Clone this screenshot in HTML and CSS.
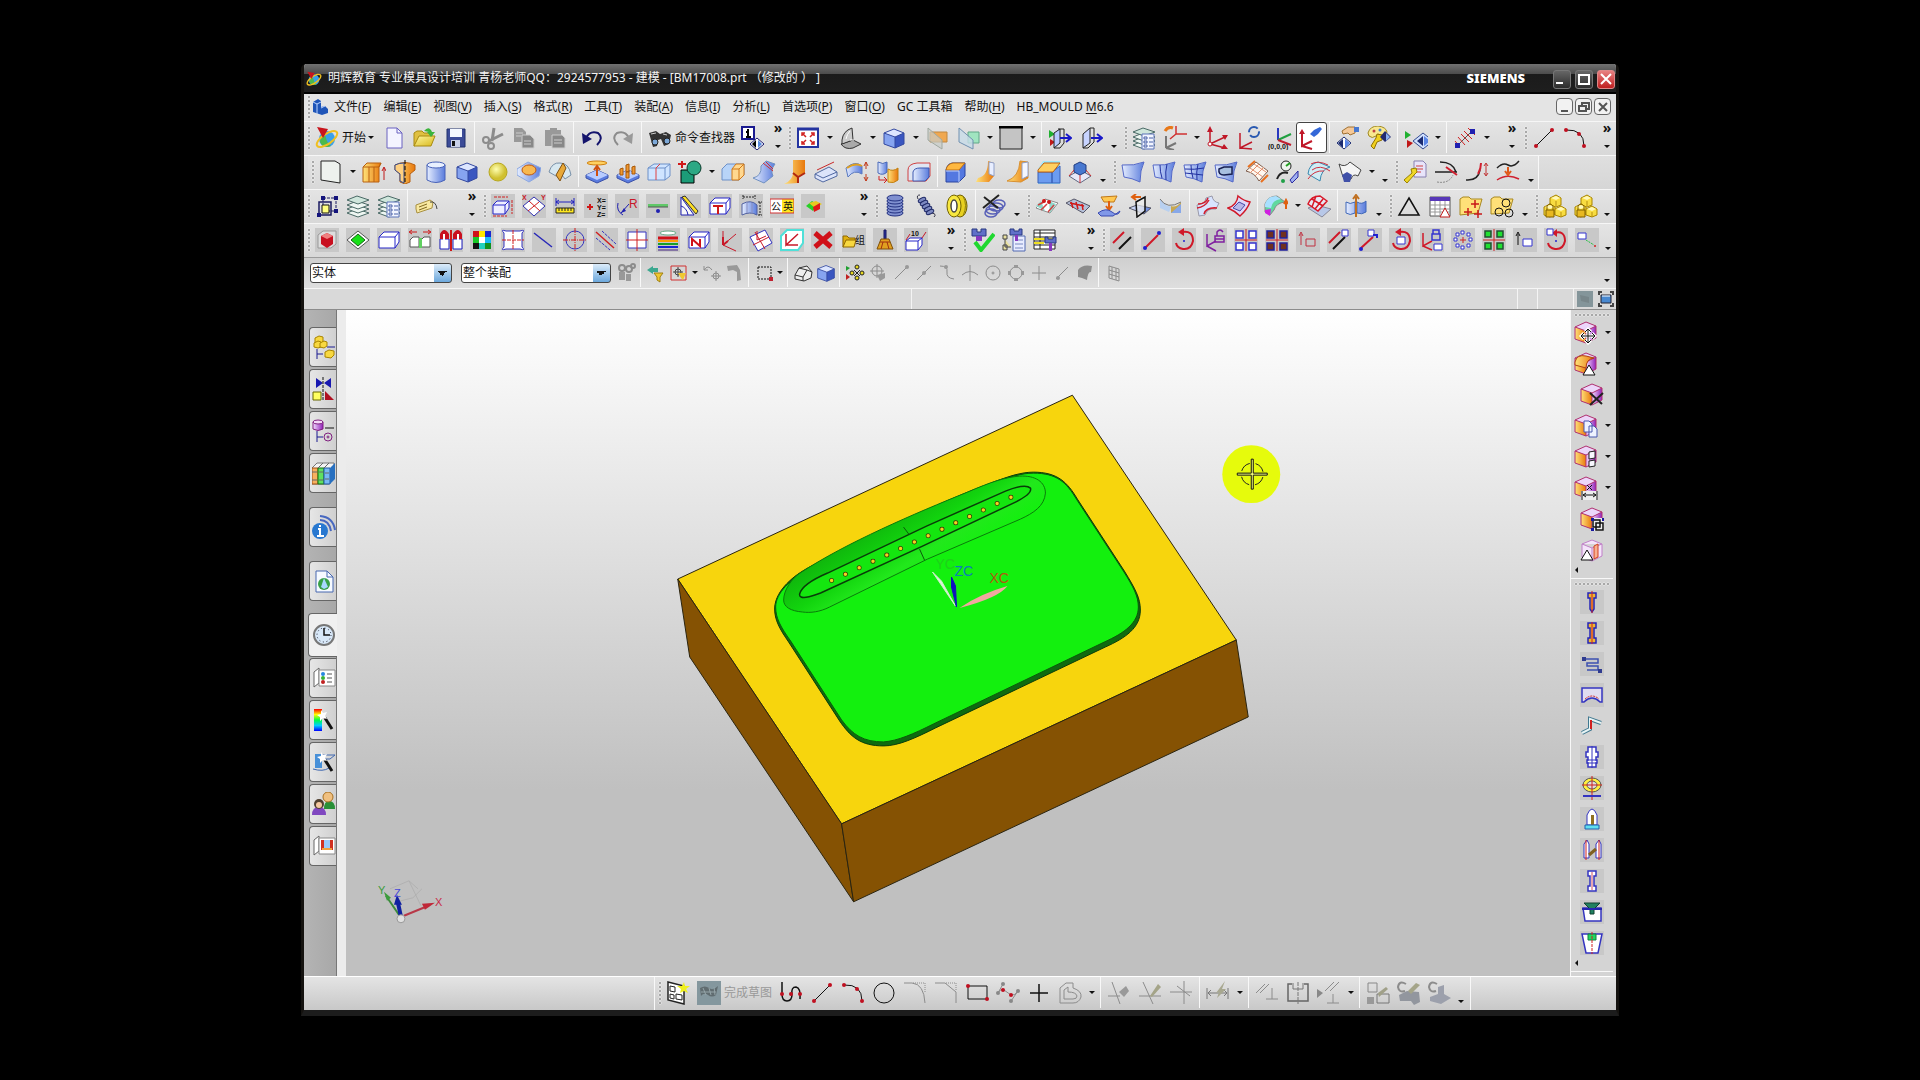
FILE: index.html
```html
<!DOCTYPE html>
<html lang="zh-CN">
<head>
<meta charset="utf-8">
<title>NX 建模 - BM17008.prt</title>
<link rel="stylesheet" href="styles.css">
</head>
<body>
<svg class="defs" aria-hidden="true">
<defs>
<linearGradient id="B"><stop offset="0" stop-color="#e6eeff"/><stop offset="1" stop-color="#5a7cdc"/></linearGradient>
<linearGradient id="O"><stop offset="0" stop-color="#ffe27a"/><stop offset="1" stop-color="#e8780c"/></linearGradient>
<linearGradient id="Y" y2="1"><stop offset="0" stop-color="#fff7a0"/><stop offset="1" stop-color="#d8b81c"/></linearGradient>
<linearGradient id="P"><stop offset="0" stop-color="#f3dcff"/><stop offset="1" stop-color="#9020b8"/></linearGradient>
<linearGradient id="R" x2="0" y2="1"><stop offset="0" stop-color="#f00"/><stop offset=".25" stop-color="#ff0"/><stop offset=".5" stop-color="#0f4"/><stop offset=".75" stop-color="#0cf"/><stop offset="1" stop-color="#00f"/></linearGradient>
<linearGradient id="G" gradientUnits="userSpaceOnUse" x1="545" y1="195" x2="590" y2="265"><stop offset="0" stop-color="#0fae0c"/><stop offset=".45" stop-color="#12d40e"/><stop offset=".7" stop-color="#22e81c"/><stop offset="1" stop-color="#13f00e"/></linearGradient>
<radialGradient id="S" cx=".4" cy=".35"><stop offset="0" stop-color="#ffffb0"/><stop offset="1" stop-color="#d0c030"/></radialGradient>
</defs>
<symbol id="logo" viewBox="0 0 24 24"><circle cx="12" cy="13" r="8" fill="#3aa0e8"/><path d="M6 9q4-2 5 3t5 8q-8 3-11-4z" fill="#4cba4c"/><ellipse cx="12" cy="13" rx="12" ry="5" transform="rotate(-35 12 13)" fill="none" stroke="#f0c020" stroke-width="2"/><path d="M2 1l11 2-5 9z" fill="#c8141c"/></symbol>
<symbol id="cube" viewBox="0 0 24 24"><path d="M2 7l10-4 10 4-9 4z" fill="#dde6ff"/><path d="M2 7l11 4v11L2 18z" fill="#86a4f0"/><path d="M13 11l9-4v11l-9 4z" fill="#3a56c0"/><path d="M2 7l10-4 10 4v11l-9 4-11-4zM2 7l11 4 9-4M13 11v11" fill="none" stroke="#3348a0"/></symbol>
<symbol id="layers" viewBox="0 0 24 24"><g stroke="#4a6a66" fill="#eef6f2"><path d="M1 19l10-4 12 4-11 4z"/><path d="M1 15l10-4 12 4-11 4z"/><path d="M1 11l10-4 12 4-11 4z"/><path d="M1 6l10-4 12 4-11 4z" fill="#cfe6dc"/></g></symbol>
<symbol id="sheet" viewBox="0 0 24 24"><use href="#layers"/><path d="M10 8h12v15H10z" fill="#f2f5ff" stroke="#5a72b8"/><path d="M12 11h3v2h-3zM12 15h3v2h-3zM12 19h3v2h-3zM17 12h4M17 16h4M17 20h4" fill="none" stroke="#4860a8"/></symbol>
<symbol id="csys" viewBox="0 0 24 24"><path d="M4 2v16l15-7M4 18l15 4" fill="none" stroke="#c01828" stroke-width="1.500"/><path d="M4 0l-3 6h6zM22 9l-6 0 3 5zM22 23l-4-5-3 5z" fill="#c01828"/></symbol>
<symbol id="face" viewBox="0 0 24 24"><path d="M1 6l11-5 10 4-10 5z" fill="#ecd6fa"/><path d="M1 6l11 4v12L1 18z" fill="url(#O)"/><path d="M12 10l10-5v12l-10 5z" fill="url(#P)"/><path d="M1 6l11-5 10 4v12l-10 5-11-4zM1 6l11 4 10-5M12 10v12" fill="none" stroke="#b03070"/></symbol>
<symbol id="gold" viewBox="0 0 24 24"><g stroke="#a88400" fill="#f8dc40"><path d="M7 4l6-3 5 3v7l-5 2-6-2z"/><path d="M1 13l6-3 5 3v7l-5 3-6-2z"/><path d="M12 15l6-3 5 3v6l-5 2-6-2z"/></g><g fill="#fff8b8"><path d="M8 4l5-2 4 2-4 2zM2 13l5-2 4 2-4 2zM13 15l5-2 4 2-4 2z"/></g><path d="M13 7v5M7 16v6M18 18v5" stroke="#b89010" fill="none"/></symbol>
<symbol id="lock" viewBox="0 0 24 24"><path d="M3 16h8v7H3z" fill="#e8b820" stroke="#806000"/><path d="M4 16v-4q3-4 6 0v4" fill="none" stroke="#806000"/></symbol>
<symbol id="diamond" viewBox="0 0 24 24"><path d="M12 4l10 8-10 8-10-8z" fill="#cfe0ff" stroke="#334a90"/><path d="M12 7v10l-6-5z" fill="#1a2a70"/><path d="M13 7v10l6-5z" fill="#5a86e8"/></symbol>
<symbol id="cyl" viewBox="0 0 24 24"><path d="M3 5v15q9 5 18 0V5z" fill="url(#B)" stroke="#4862b8"/><ellipse cx="12" cy="5" rx="9" ry="3" fill="#e8f0ff" stroke="#4862b8"/></symbol>
<symbol id="slab" viewBox="0 0 24 24"><path d="M1 15l11-5 11 5v3l-11 5-11-5z" fill="#5a7ce0" stroke="#3a50a8"/><path d="M1 15l11-5 11 5-11 5z" fill="#b8ccff"/></symbol>
<symbol id="surf" viewBox="0 0 24 24"><path d="M1 5q12 1 22-3-4 8-4 20-8-4-16-5-1-6-2-12z" fill="url(#B)" stroke="#5468c8"/></symbol>
<symbol id="page" viewBox="0 0 24 24"><path d="M2 6l5-4v15l-5 4z" fill="#fff" stroke="#666"/><path d="M7 4h16v16H7z" fill="#fff" stroke="#888"/></symbol>
<symbol id="block" viewBox="0 0 24 24"><path d="M2 9l5-5h15v10l-4 6H2zM2 9h16v11M18 9l4-5" fill="#fff" stroke="#2626c8"/></symbol>
</svg>

<div class="window">
<header class="title">
<svg class="i16" viewBox="0 0 24 24"><use href="#logo"/></svg>
<h1>明辉教育 专业模具设计培训 青杨老师QQ：2924577953 - 建模 - [BM17008.prt （修改的 ） ]</h1>
<strong>SIEMENS</strong>
<div class="wbtns">
<button aria-label="最小化"><svg><path class="w2" d="M3 13h7"/></svg></button>
<button aria-label="最大化"><svg><path class="w2" d="M4 5h10v9H4z"/></svg></button>
<button class="close" aria-label="关闭"><svg><path class="w2" d="M4 4l10 10M14 4L4 14"/></svg></button>
</div>
</header>

<nav class="menu">
<i class="grip"></i>
<svg class="i16"><path d="M1 3l5-3 3 2v6l4-1 3 3v4l-6 2-9-3z" fill="#1f55b8"/><path d="M1 3l4 2v10M9 9l4-2M5 5l4-2" stroke="#bcd4ff"/></svg>
<button>文件(<u>F</u>)</button><button>编辑(<u>E</u>)</button><button>视图(<u>V</u>)</button><button>插入(<u>S</u>)</button><button>格式(<u>R</u>)</button><button>工具(<u>T</u>)</button><button>装配(<u>A</u>)</button><button>信息(<u>I</u>)</button><button>分析(<u>L</u>)</button><button>首选项(<u>P</u>)</button><button>窗口(<u>O</u>)</button><button>GC 工具箱</button><button>帮助(<u>H</u>)</button><button>HB_MOULD <u>M</u>6.6</button>
<div class="mdi">
<button aria-label="最小化文档"><svg><path d="M4 12h7" class="d2"/></svg></button>
<button aria-label="还原文档"><svg><path d="M6 6V4h7v6h-2M3 7h7v5H3z" class="d2"/></svg></button>
<button aria-label="关闭文档"><svg><path d="M4 4l8 8M12 4l-8 8" class="d2"/></svg></button>
</div>
</nav>

<div class="row">
<div class="bar"><i class="grip"></i>
<button class="lbl start"><svg><use href="#logo"/></svg>开始<i class="dn"></i></button>
<button class="b" aria-label="新建"><svg><path d="M5 2h10l5 5v15H5z" fill="#f4f4ff" stroke="#6a62c0"/><path d="M15 2v5h5" stroke="#6a62c0"/></svg></button>
<button class="b" aria-label="打开"><svg><path d="M1 20V7l3-2h5l2 2h8v4z" fill="#e0c040" stroke="#a88a10"/><path d="M1 20l5-10h16l-4 10z" fill="url(#Y)" stroke="#a88a10"/><path d="M11 5q5-6 8 1h3l-4 5-4-5h2" fill="#3cb43c"/></svg></button>
<button class="b" aria-label="保存"><svg><path d="M3 3h18v18H3z" fill="#3c4c98" stroke="#20306c"/><path d="M6 3h12v8H6z" fill="#f4f8ff"/><path d="M7 14h9v7H7z" fill="#c8d0e8"/><path d="M8 15h3v5H8z" fill="#111"/></svg></button>
<i class="sep"></i>
<button class="b" aria-label="剪切"><svg><path d="M13 2l-2 13M22 8L8 15" class="g" stroke-width="3"/><circle cx="5" cy="14" r="3" class="g2"/><circle cx="10" cy="20" r="3" class="g2"/></svg></button>
<button class="b" aria-label="复制"><svg><path d="M2 2h8l4 4v10H2z" fill="#999"/><path d="M10 9h8l4 4v9H10z" fill="#888" stroke="#ccc"/><path d="M4 7h7M4 10h5M12 15h7M12 18h7" stroke="#ccc"/></svg></button>
<button class="b" aria-label="粘贴"><svg><path d="M2 4h16v16H2zM7 2h7v4H7z" fill="#999"/><path d="M9 9h10l3 3v10H9z" fill="#888" stroke="#ccc"/><path d="M11 14h8M11 17h8" stroke="#ccc"/></svg></button>
<i class="sep"></i>
<button class="b" aria-label="撤消"><svg><path d="M6 12q4-8 12-5 6 5-1 12" stroke="#14146c" stroke-width="2"/><path d="M2 7l1 11 9-5z" fill="#14146c"/></svg></button>
<button class="b" aria-label="重做"><svg><path d="M18 12q-4-8-12-5-6 5 1 12" class="g" stroke-width="2"/><path d="M22 7l-1 11-9-5z" fill="#999"/></svg></button>
<i class="sep"></i>
<button class="lbl find"><svg><path d="M1 7l7-2 4 3 6-2 5 3-2 9-5 2-3-7-3 1-1 6-4 1z" fill="#333"/><circle cx="7" cy="16" r="3" fill="#7ca8d8" stroke="#222"/><circle cx="19" cy="15" r="3" fill="#7ca8d8" stroke="#222"/><path d="M3 8l5-1M15 8l4 1" stroke="#ccc"/></svg>命令查找器</button>
<button class="b" aria-label="信息"><svg><path d="M1 1h12v12H1z" fill="#fff" stroke="#1a1a90" stroke-width="2"/><path d="M7 3v2M5 6h2v5M5 11h5" stroke="#000" stroke-width="2"/><path d="M16 12l7 6-7 6-7-6z" fill="#fff" stroke="#1a1a70"/><path d="M15 14v8l-4-4z" fill="#000"/><path d="M17 14v8l4-4z" fill="#58d"/></svg></button>
<div class="more m16"><span>»</span><i class="dn"></i></div></div>

<div class="bar"><i class="grip"></i>
<button class="b" aria-label="适合窗口"><svg><path d="M2 3h20v18H2z" fill="#fff" stroke="#2434a0" stroke-width="2"/><path d="M1 3h22" stroke="#2434a0" stroke-width="3"/><path d="M6 10V7h3M15 7h3v3M18 15v3h-3M9 18H6v-3M7 8l3 3M17 8l-3 3M17 17l-3-3M7 17l3-3" stroke="#d02020" stroke-width="1.500"/></svg></button><i class="dn"></i>
<button class="b" aria-label="视图方位"><svg><path d="M2 18l12-4 8 4-8 4q-8 2-12-4z" fill="#aaa" stroke="#333"/><path d="M3 14Q4 5 13 2l1 12-11 4z" fill="#ccc" stroke="#333"/><path d="M7 13q1-5 4-8M11 14h4" stroke="#fff"/></svg></button><i class="dn"></i>
<button class="b" aria-label="着色"><svg><use href="#cube"/></svg></button><i class="dn"></i>
<button class="b" aria-label="剪切截面"><svg><path d="M5 6h17v10H5z" fill="#f0a850" stroke="#c08840"/><path d="M3 2l14 12v9L3 14z" fill="#c8ccc8" fill-opacity=".7" stroke="#a0a8a0"/></svg></button>
<button class="b" aria-label="编辑截面"><svg><path d="M12 6h11v11H12z" fill="#a0e4c0" stroke="#60a888"/><path d="M3 2l14 12v9L3 16z" fill="#c8dce8" fill-opacity=".8" stroke="#7090b0"/></svg></button><i class="dn"></i>
<button class="b" aria-label="背景"><svg><path d="M1 1h22v22H1z" fill="#c4c4c4" stroke="#222"/><path d="M0 1h24" stroke="#000" stroke-width="3"/></svg></button><i class="dn"></i><i class="sep"></i>
<button class="b" aria-label="显示部件"><svg><path d="M1 4l6 4-6 4z" fill="#20b030"/><path d="M2 13l5 3-5 4z" fill="#c01818"/><path d="M6 7l6-4v14l-6 5z" fill="#b8c8ff" stroke="#222"/><path d="M10 3h6v14l-4 5H6" stroke="#222"/><path d="M12 12h10M18 8l5 4-5 4" stroke="#1818c8" stroke-width="2"/></svg></button>
<button class="b" aria-label="隐藏部件"><svg><path d="M4 8l7-6v15l-7 5z" fill="#c8d4ff" stroke="#222"/><path d="M11 2h4v14l-6 6H4" stroke="#222"/><path d="M12 12h10M18 8l5 4-5 4" stroke="#1818c8" stroke-width="2"/></svg></button>
<div class="more"><i class="dn"></i></div></div>

<div class="bar"><i class="grip"></i>
<button class="b" aria-label="图层设置"><svg><use href="#sheet"/></svg></button>
<button class="b" aria-label="动态WCS"><svg><path d="M3 22V10M3 22l10-5M3 22l8 2" stroke="#777" stroke-width="2"/><path d="M13 8V0M13 8l-6 5M13 8h11" stroke="#d03030" stroke-width="1.500"/><path d="M2 5q3-5 8-3" stroke="#e87818" stroke-width="3"/></svg></button><i class="dn"></i>
<button class="b" aria-label="WCS原点"><svg><use href="#csys"/><circle cx="4" cy="18" r="2" fill="#fff" stroke="#c01828"/></svg></button>
<button class="b" aria-label="旋转WCS"><svg><path d="M3 7v15l12-6M3 22l12 1" stroke="#c01828" stroke-width="1.500"/><circle cx="17" cy="6" r="5" stroke="#2858b0" stroke-width="2" stroke-dasharray="12 3"/></svg></button>
<button class="b" aria-label="WCS至绝对"><svg><path d="M10 14V2" stroke="#2838c0" stroke-width="2"/><path d="M10 14l13-6" stroke="#20a040" stroke-width="2"/><path d="M10 14l13 5" stroke="#c02030" stroke-width="2"/><text x="0" y="23" class="tiny">(0,0,0)</text></svg></button>
<button class="b on" aria-label="显示WCS"><svg><path d="M3 5v15l10-5M3 20l10 3" stroke="#c01828" stroke-width="2"/><path d="M3 3l-3 5h6z" fill="#c01828"/><path d="M11 8l4-4 6-3 2 2-4 5-4 3z" fill="#3468d8"/></svg></button>
<i class="sep"></i>
<button class="b" aria-label="编辑对象显示"><svg><path d="M8 11l7 6-7 6-7-6z" fill="#fff" stroke="#1a2a70"/><path d="M7 13v9l-5-5z" fill="#1a2a70"/><path d="M9 13v9l5-5z" fill="#5a86e8"/><path d="M6 5l6-4h7v6l-5 2-2-2-5 1z" fill="#f4c898" stroke="#a07030"/><path d="M18 1h5v5h-5z" fill="#4878d0"/></svg></button>
<button class="b" aria-label="编辑"><svg><path d="M1 7q2-7 10-7 8 1 9 6-1 4-6 3-3-2-5 1-4 3-7 0z" fill="#f8e890" stroke="#a08820"/><circle cx="7" cy="5" r="1.500" fill="#c04040"/><circle cx="13" cy="4" r="1.500" fill="#4080d0"/><path d="M4 20l5-8 1-4 5 1 0 5-5 2-3 7z" fill="#f0d020" stroke="#907000"/><path d="M18 5l6 6-6 5-5-5z" fill="#222a70"/><path d="M19 7v8l4-4z" fill="#8ab0f0"/></svg></button>
<i class="sep"></i>
<button class="b" aria-label="显示和隐藏"><svg><path d="M1 5l6 4-6 4z" fill="#20b030"/><path d="M3 14l6 3-6 5z" fill="#c01818"/><svg x="7" y="3" width="17" height="17" viewBox="0 0 24 24"><use href="#diamond"/></svg></svg></button><i class="dn"></i><i class="sep"></i>
<button class="b" aria-label="测量距离"><svg><path d="M5 19L19 5" stroke="#555"/><path d="M5 11l7 8M8 8l8 8M11 5l8 8M2 15l5 6M15 2l7 7" stroke="#d02020"/><path d="M2 17h5v5H2zM17 3h5v5h-5z" fill="#2020b0"/></svg></button><i class="dn"></i>
<div class="more m28"><span>»</span><i class="dn"></i></div></div>

<div class="bar last"><i class="grip"></i>
<button class="b" aria-label="直线"><svg><path d="M4 20L20 4" stroke="#111"/><circle cx="4" cy="20" r="2" fill="#c01020"/><circle cx="20" cy="4" r="2" fill="#c01020"/></svg></button>
<button class="b" aria-label="圆弧"><svg><path d="M3 4q18-1 18 16" stroke="#111"/><circle cx="3" cy="4" r="2" fill="#c01020"/><circle cx="16" cy="8" r="2" fill="#c01020"/><circle cx="21" cy="20" r="2" fill="#c01020"/></svg></button>
<div class="more m14"><span>»</span><i class="dn"></i></div></div>
</div>

<div class="row in">
<div class="bar"><i class="grip"></i>
<button class="b" aria-label="草图"><svg><path d="M2 1h14l5 3v19L2 20z" fill="#eef2ee" stroke="#222"/></svg></button><i class="dn"></i>
<button class="b" aria-label="拉伸"><svg><path d="M1 7l4-4h14l-2 4v15H1z" fill="url(#O)" stroke="#b86010"/><path d="M1 7h16l2-4M7 7v15M12 7v15" stroke="#b86010"/><path d="M22 20V8M20 11l2-4 2 4" stroke="#c01818"/></svg></button>
<button class="b" aria-label="回转"><svg><path d="M2 5q10-5 20 0v5l-5 4v8l-5 2-5-2v-8l-5-4z" fill="url(#O)" stroke="#b86010"/><path d="M2 5q4-2 9-2v20l-4-2v-7l-5-4z" fill="#ffd080" stroke="#334a90"/><path d="M12 0v24" stroke="#000" stroke-dasharray="4 2"/></svg></button>
<button class="b" aria-label="圆柱"><svg><use href="#cyl"/></svg></button>
<button class="b" aria-label="长方体"><svg><use href="#cube"/></svg></button>
<button class="b" aria-label="球"><svg><circle cx="12" cy="12" r="9" fill="url(#S)" stroke="#b8a820"/></svg></button>
<button class="b" aria-label="孔"><svg><path d="M0 9l11-7 13 6-2 8-10 6-12-7z" fill="url(#B)" stroke="#8ca8e0"/><ellipse cx="12" cy="10" rx="7" ry="5" fill="#f8b850" stroke="#c05810"/></svg></button>
<button class="b" aria-label="螺纹"><svg><path d="M1 12Q4 2 12 3q9 0 11 12l-6 4q-3-6-9-3z" fill="#d8e8f0" stroke="#7890a8"/><path d="M15 3l-7 12 4 6 6-13z" fill="#e8a838" stroke="#805010"/></svg></button>
<i class="sep"></i>
<button class="b" aria-label="凸起"><svg><use href="#slab"/><ellipse cx="12" cy="3" rx="10" ry="2" fill="#ffd060" stroke="#d08010"/><path d="M12 16V7M9 10l3-4 3 4" stroke="#d05010" stroke-width="2"/></svg></button>
<button class="b" aria-label="阵列特征"><svg><use href="#slab"/><path d="M4 15V9l3-1v7zM10 12V5l3-1v8zM16 14V7l3-1v8zM10 18v-6l3-1v7z" fill="#f09830" stroke="#a85808"/></svg></button>
<button class="b" aria-label="拆分体"><svg><path d="M1 8l6-4h16v12l-5 4H1z" fill="#cfe4ff" stroke="#6c90c8"/><path d="M1 8h17v12M18 8l5-4" stroke="#6c90c8"/><path d="M13 4l-4 4v12" stroke="#e04040"/></svg></button>
<button class="b" aria-label="求和"><svg><path d="M3 10h13v13H3z" fill="#1c9c78" stroke="#000"/><circle cx="16" cy="8" r="7" fill="#2ca884" stroke="#083828"/><path d="M4 1v7M0 4h8" stroke="#d01818" stroke-width="2"/></svg></button><i class="dn"></i>
<button class="b" aria-label="修剪体"><svg><path d="M1 9l5-5h17v11l-5 5H1z" fill="#b8d4f8" stroke="#6c90c8"/><path d="M11 9l4-5h8v11l-5 5h-7z" fill="#ffd890" stroke="#d07818"/><path d="M11 9h7l5-5M18 9v11" stroke="#d07818"/></svg></button>
<button class="b" aria-label="缝合"><svg><path d="M1 18q9-2 8-12l5-5 9 3q-5 6-2 12l-9 7z" fill="url(#B)" stroke="#7090c0"/><path d="M11 3l10 8M14 2l7 7" stroke="#d03030"/></svg></button>
<button class="b" aria-label="加厚"><svg><path d="M10 0h12v13l-7 3-5-3zM10 13l5 3v7l-14 1q9-4 9-11z" fill="url(#O)"/><path d="M10 13l5 4 7-4M15 17v6" stroke="#b02810" stroke-width="2"/></svg></button>
<button class="b" aria-label="缩放"><svg><path d="M1 14l14-7 8 5v4L9 22l-8-4z" fill="#dce4fa" stroke="#5068a0"/><path d="M1 14l8 4 14-6" stroke="#5068a0"/><path d="M3 10l17-8" stroke="#c82828"/></svg></button>
<button class="b" aria-label="偏置面"><svg><path d="M1 8q9-8 16-2v8q-8-5-14 3z" fill="url(#B)" stroke="#5878c0"/><path d="M2 8q8-6 15-2" stroke="#e0a020" stroke-width="2"/><path d="M21 2v7M21 14v7M19 6l2-4 2 4M19 17l2 4 2-4" stroke="#c03818"/></svg></button>
<button class="b" aria-label="替换面"><svg><path d="M2 2q5 3 9 0v10q-4 4-9 1z" fill="url(#B)" stroke="#4868b8"/><path d="M12 9q5 3 10-1v12q-4 4-10 2z" fill="url(#O)" stroke="#c08010"/><path d="M3 16v4h7M8 17l3 3-3 3" stroke="#d02020"/></svg></button>
<button class="b" aria-label="包裹"><svg><path d="M1 10q0-6 9-7h13v13l-4 5H1z" fill="#dfe9ff" fill-opacity=".6" stroke="#d04040"/><path d="M6 12q1-4 7-4h9v9l-4 4H6z" fill="url(#B)" stroke="#3c58b0"/></svg></button>
<i class="sep"></i>
<button class="b" aria-label="边倒圆"><svg><path d="M2 10q1-6 6-7h13v13l-6 6H2z" fill="#5478e0" stroke="#2a44a0"/><path d="M2 10q1-6 7-7h12l-6 7z" fill="#ffb840" stroke="#c07010"/><path d="M2 11h13v11" stroke="#bcd0ff"/></svg></button>
<button class="b" aria-label="倒斜角"><svg><path d="M13 1l6 2v13l-5 6H1l2-4q10-2 10-17z" fill="url(#O)"/><path d="M19 3v13l-5-2V2z" fill="#e8eeff" stroke="#90a0c8"/></svg></button>
<button class="b" aria-label="拔模"><svg><path d="M14 1l8 1v16l-7 4-14-1q12-4 13-20z" fill="url(#O)" stroke="#d89030"/><path d="M16 3l6-1v14l-6 3z" fill="#f4f6ff" stroke="#90a0c8"/></svg></button>
<button class="b" aria-label="抽壳"><svg><path d="M1 9l5-8h17v23H1z" fill="#a0e8f8"/><path d="M1 12h14v11H1zM15 12l8-6v17h-8z" fill="#6c9cf0" stroke="#3860b8"/><path d="M1 10l6-7h16l-7 9H1z" fill="#ffd060" stroke="#c06010"/></svg></button>
<button class="b" aria-label="拔模体"><svg><path d="M1 16l11-6 11 6-11 7z" fill="#e8e8f8" stroke="#606880"/><path d="M6 5l6-3 6 3v7l-6 3-6-3z" fill="#4878d0" stroke="#203c80"/><path d="M1 16l5-6M23 16l-5-6M12 23v-8" stroke="#d03030"/></svg></button>
<div class="more"><i class="dn"></i></div></div>

<div class="bar"><i class="grip"></i>
<button class="b" aria-label="直纹面"><svg><use href="#surf"/></svg></button>
<button class="b" aria-label="通过曲线组"><svg><use href="#surf"/><path d="M8 5q0 7 2 13M15 4q-2 8-1 16" stroke="#2030a0"/></svg></button>
<button class="b" aria-label="通过曲线网格"><svg><use href="#surf"/><path d="M8 5q0 7 2 13M15 4q-2 8-1 16M2 9q9 1 19-1M2 13q9 1 18 2" stroke="#2030a0"/></svg></button>
<button class="b" aria-label="N边曲面"><svg><use href="#surf"/><path d="M5 9l5-2 8 0v7l-8 1q-6 0-5-6z" fill="#a8c0e0" stroke="#182050" stroke-width="1.500"/></svg></button>
<button class="b" aria-label="扫掠"><svg><path d="M1 11l10-9 12 9-9 10q-4-8-13-10z" fill="#fff8f0" stroke="#806050"/><path d="M5 8l13 9M9 4l12 8M5 13l9-9M10 16l9-9" stroke="#e09070"/><path d="M3 7l7-6M16 22l7-7" stroke="#e87020" stroke-width="2"/></svg></button>
<button class="b" aria-label="样式扫掠"><svg><circle cx="10" cy="6" r="5" fill="#eef4ee" stroke="#222"/><path d="M10 6l4-3" stroke="#20a020" stroke-width="2"/><path d="M1 19q3-8 11-6" stroke="#222" stroke-width="2"/><circle cx="7" cy="21" r="2" fill="#20a048"/><path d="M14 20l8-9v6l-6 6z" fill="#a0b0f0" stroke="#2828a0"/></svg></button>
<button class="b" aria-label="变化扫掠"><svg><path d="M1 14q1-10 10-12l12 5q-9 2-10 14z" fill="#d0ecf4" stroke="#3888b0"/><path d="M5 10q8-6 18 1M1 19q6-9 16-8M4 4q7-4 17 1" stroke="#d03040"/></svg></button>
<button class="b" aria-label="片体"><svg><path d="M1 4q6 4 11-2l11 8-3 6q-5-3-7 3-4 3-8-2z" fill="#f4f4f4" stroke="#444"/><path d="M4 15l5-3 5 3-2 7-6 0z" fill="#4050a8"/></svg></button><i class="dn"></i>
<div class="more"><i class="dn"></i></div></div>

<div class="bar"><i class="grip"></i>
<button class="b" aria-label="用户默认"><svg><path d="M11 1h9l3 3v13H11z" fill="#e8e4fa" stroke="#8880b0"/><path d="M13 6h7M13 9h7M13 12h5" stroke="#d04040"/><path d="M1 20l8-7-1-4 5-1 1 4-3 3-7 8z" fill="#f0d828" stroke="#988000"/></svg></button>
<button class="b" aria-label="修剪曲线"><svg><path d="M6 2q13 0 16 10M1 12h22" stroke="#222" stroke-width="1.500"/><path d="M3 22q12 2 16-7" stroke="#888" stroke-dasharray="2 1"/><path d="M12 7l11 8" stroke="#d02030" stroke-width="2"/></svg></button>
<button class="b" aria-label="曲线长度"><svg><path d="M1 20q12 1 14-10" stroke="#222" stroke-width="1.500"/><path d="M16 3q0 6-3 11" stroke="#d02030" stroke-width="2"/><path d="M21 4v11M19 6l2-3 2 3M19 13l2 3 2-3" stroke="#c03030"/></svg></button>
<button class="b" aria-label="偏置曲线"><svg><path d="M1 8q6-6 11-3t11-4" stroke="#222" stroke-width="1.500"/><path d="M1 20q10-7 22-1" stroke="#d02030" stroke-width="1.500"/><path d="M12 7v6M9 11l3 4 3-4" stroke="#e05818" stroke-width="2"/></svg></button>
<div class="more"><i class="dn"></i></div></div>
</div>

<div class="row">
<div class="bar"><i class="grip"></i>
<button class="b" aria-label="复合"><svg><path d="M8 4h13v13H8z" stroke="#1a1a60" stroke-dasharray="3 1"/><path d="M4 8h12v13H4z" stroke="#1a1a60" stroke-width="1.500"/><path d="M7 11h7v8H7z" fill="#ffff80" stroke="#111"/><path d="M6 2h4v4H6zM19 2h4v4h-4zM19 15h4v4h-4zM2 19h4v4H2z" fill="#14147c"/></svg></button>
<button class="b" aria-label="图层"><svg><use href="#layers"/></svg></button>
<button class="b" aria-label="图层类别"><svg><use href="#sheet"/></svg></button>
<i class="sep"></i>
<button class="b" aria-label="属性"><svg><path d="M2 11l14-5 3 2-1 6-15 5-1-4z" fill="#f8e8a0" stroke="#a89040"/><path d="M5 13l8-3M5 16l8-3" stroke="#806820"/><path d="M16 8q6-1 7 7" stroke="#444"/></svg></button>
<div class="more m38"><span>»</span><i class="dn"></i></div></div>

<div class="bar"><i class="grip"></i>
<button class="b t" aria-label="包容块"><svg><path d="M2 11l4-4h12v7l-4 6H2zM2 11h12v9M14 11l4-4" fill="#eef" stroke="#2626c8"/><path d="M3 3h14M21 6v14M2 22h14" stroke="#d02020" stroke-dasharray="3 1"/></svg></button>
<button class="b t" aria-label="分型网格"><svg><path d="M12 3l11 9-11 10L1 12z" fill="#fff" stroke="#3434b0"/><path d="M7 7l11 10M17 8L6 17" stroke="#d02020"/><text x="0" y="6" class="tiny red">X</text><text x="19" y="6" class="tiny red">Y</text></svg></button>
<button class="b t" aria-label="测量"><svg><path d="M3 4v8M21 4v8M3 8h18M6 6L3 8l3 2M18 6l3 2-3 2" stroke="#2020c0"/><path d="M3 14h18v5H3z" fill="#ffe820" stroke="#222"/><path d="M6 14v3M9 14v3M12 14v3M15 14v3M18 14v3" stroke="#222"/></svg></button>
<button class="b t" aria-label="坐标"><svg><path d="M6 10v6M3 13h6" stroke="#d01818" stroke-width="2"/><text x="13" y="9" class="tiny">X=</text><text x="13" y="16" class="tiny">Y=</text><text x="13" y="23" class="tiny">Z=</text></svg></button>
<button class="b t" aria-label="半径"><svg><path d="M3 9q-2 8 5 12M6 19l8-9" stroke="#2020b0"/><path d="M6 19l3-5 2 3z" fill="#2020b0"/><text x="14" y="14" class="small red">R</text></svg></button>
<button class="b t" aria-label="水平"><svg><path d="M2 10h20v3H2z" fill="#60c868"/><path d="M2 13h20" stroke="#555"/><circle cx="12" cy="17" r="2" fill="#2020b0"/></svg></button>
<button class="b t" aria-label="角度"><svg><path d="M4 3v18h13z" fill="#f8f8f8" stroke="#2020b0"/><path d="M5 3l3-1 13 15-2 3z" fill="#ffe020" stroke="#333"/><path d="M4 12q6 2 7 9" stroke="#2020b0"/></svg></button>
<button class="b t" aria-label="文字块"><svg><use href="#block"/><path d="M5 12h10M10 12v8" stroke="#d01818" stroke-width="2"/></svg></button>
<button class="b t" aria-label="模仁"><svg><path d="M3 10q9-5 15 1v10q-7-4-15 0z" fill="url(#B)" stroke="#5060a0"/><path d="M8 9v10M13 9v11" stroke="#8890c0"/><path d="M4 3h12M4 1v4M16 1v4M21 8v13M19 8h4M19 21h4" stroke="#222" stroke-dasharray="2 1"/></svg></button>
<button class="b t" aria-label="公英制"><svg><path d="M0 5h12v14H0z" fill="#fff"/><path d="M12 5h12v14H12z" fill="#ffe820"/><path d="M0 5h24v14H0z" stroke="#d03030"/><text x="1" y="16" class="cn">公</text><text x="13" y="16" class="cn">英</text></svg></button>
<button class="b t" aria-label="着色块"><svg><path d="M5 12l6-5 6 4-5 6z" fill="#28d028"/><path d="M8 9l7-2 6 3-7 4z" fill="#e8c820"/><path d="M12 13l7-4v6l-6 3z" fill="#e01818"/></svg></button>
<div class="more m43"><span>»</span><i class="dn"></i></div></div>

<div class="bar"><i class="grip"></i>
<button class="b" aria-label="圆柱弹簧"><svg><g fill="#8090d0" stroke="#223080"><ellipse cx="12" cy="19" rx="8" ry="3"/><ellipse cx="12" cy="16" rx="8" ry="3"/><ellipse cx="12" cy="13" rx="8" ry="3"/><ellipse cx="12" cy="10" rx="8" ry="3"/><ellipse cx="12" cy="7" rx="8" ry="3"/><ellipse cx="12" cy="4" rx="8" ry="3"/></g></svg></button>
<button class="b" aria-label="拉伸弹簧"><svg><path d="M4 5q-2-4 2-4M18 19q5 1 2 4" stroke="#334"/><g stroke="#202a68" fill="#7c88c0"><ellipse cx="8" cy="6" rx="4" ry="2" transform="rotate(-25 8 6)"/><ellipse cx="10" cy="9" rx="4" ry="2" transform="rotate(-25 10 9)"/><ellipse cx="12" cy="12" rx="4" ry="2" transform="rotate(-25 12 12)"/><ellipse cx="14" cy="15" rx="4" ry="2" transform="rotate(-25 14 15)"/><ellipse cx="16" cy="18" rx="4" ry="2" transform="rotate(-25 16 18)"/></g></svg></button>
<button class="b" aria-label="碟簧"><svg><ellipse cx="15" cy="12" rx="7" ry="11" fill="#e8d020" stroke="#706000"/><ellipse cx="9" cy="12" rx="7" ry="11" fill="#f8e840" stroke="#706000"/><path d="M18 2q5 9 0 20" stroke="#908010"/><ellipse cx="9" cy="12" rx="3" ry="6" fill="#fff" stroke="#444" stroke-width="1.500"/></svg></button>
<i class="sep"></i>
<button class="b" aria-label="删除弹簧"><svg><g stroke="#5860b8" stroke-width="1.500"><ellipse cx="9" cy="19" rx="6" ry="4"/><ellipse cx="11" cy="16" rx="7" ry="4"/><ellipse cx="14" cy="13" rx="7" ry="4"/><ellipse cx="17" cy="10" rx="6" ry="4"/></g><path d="M2 3l14 11M17 1L1 14" stroke="#222" stroke-width="2"/></svg></button>
<div class="more"><i class="dn"></i></div></div>

<div class="bar"><i class="grip"></i>
<button class="b" aria-label="曲面点"><svg><path d="M1 14L10 5l13 4-8 10z" fill="#fff" stroke="#888"/><path d="M1 12l5-5 4 10M14 7l7 3-6 9z" fill="#90d8cc"/><path d="M3 11l6-3M6 16l6-6M13 18l6-7" stroke="#d04040" stroke-width="1.500"/><circle cx="9" cy="7" r="2" fill="#d01818"/><circle cx="14" cy="8" r="2" fill="#d01818"/></svg></button>
<button class="b" aria-label="缝合面"><svg><path d="M0 9l8-4 16 7-7 7z" fill="#b4c0d8" stroke="#556"/><path d="M5 8l2 6M10 8l2 7M16 10l1 6M4 9l14 3" stroke="#d01818" stroke-width="1.500"/></svg></button>
<button class="b" aria-label="扩大"><svg><path d="M4 3l16-1-3 6H7z" fill="#ffc850" stroke="#c07818"/><path d="M12 15V7M9 12l3 4 3-4" stroke="#e06010" stroke-width="2"/><path d="M1 19q8-6 14-1t8-1l-7 5H4z" fill="#8098e8" stroke="#3848b0"/></svg></button>
<button class="b" aria-label="剪断"><svg><path d="M1 14l8-3 14 3-7 6z" fill="url(#B)" stroke="#556"/><path d="M8 8l9-5v14l-8 6z" fill="#eee" fill-opacity=".7" stroke="#111" stroke-width="1.500"/><path d="M5 3h8M8 0L4 3l4 3" stroke="#e06010" stroke-width="2"/></svg></button>
<button class="b" aria-label="X成形"><svg><path d="M1 5q7 9 12 7l-3 6-9-4z" fill="#b8d0f0"/><path d="M12 12q5 2 10-4v11H12z" fill="#c8a850"/><path d="M12 19l10-9v9z" fill="#88a8e8"/><path d="M1 5q7 11 21 3" stroke="#777"/></svg></button>
<i class="sep"></i>
<button class="b" aria-label="桥接"><svg><path d="M1 11q8-1 9-7l6-2q1 6 7 7l-3 6q-9-1-11 6l-6 1z" fill="#d8e4ff" stroke="#99a"/><path d="M2 10q8 0 10-6M8 20q2-7 13-6M1 14q8-1 12-8" stroke="#d02030" stroke-width="1.500"/></svg></button>
<button class="b" aria-label="偏置曲面"><svg><path d="M1 14q9-3 10-12 6 5 12 6-3 8-10 14-5-5-12-8z" fill="#e0d8f8" stroke="#d01828" stroke-width="1.500"/><path d="M6 14l6-6 6 3-5 6z" fill="#b8b8e8" stroke="#4848a8"/></svg></button>
<i class="sep"></i>
<button class="b" aria-label="面分析"><svg><path d="M1 10Q4 2 13 2l8 6q-9 1-11 8l-4 5-5-3z" fill="#60d8a0" stroke="#888"/><path d="M1 10q3-8 11-8l5 3Q8 6 7 14l-6-1z" fill="#a8e0ff"/><path d="M1 16l6-1-1 7-5-3z" fill="#d020e0"/><path d="M22 15V8M20 10l2-4 2 4" stroke="#e06010" stroke-width="2"/></svg></button><i class="dn"></i>
<button class="b" aria-label="网格曲面"><svg><path d="M1 14l8-3 15 4-9 8z" fill="#b8c8e8" stroke="#889"/><path d="M1 10q3-8 12-8l7 5-9 10z" fill="#e8e8f4"/><path d="M1 10q3-8 12-8l7 5-9 10zM5 5l11 7M9 2l-4 11M16 5L8 15" stroke="#d81828" stroke-width="1.500"/></svg></button>
<i class="sep"></i>
<button class="b" aria-label="对称"><svg><path d="M2 8q4 3 9 0v11q-5 3-9 0zM13 8q5 3 9-1v11q-4 3-9 1z" fill="url(#B)" stroke="#4068b8"/><path d="M12 3v20M9 5l3-4 3 4" stroke="#c07020" stroke-width="2"/></svg></button>
<div class="more"><i class="dn"></i></div></div>

<div class="bar"><i class="grip"></i>
<button class="b" aria-label="三角"><svg><path d="M12 4l10 17H2z" stroke="#111" stroke-width="1.500"/></svg></button>
<button class="b" aria-label="表格"><svg><path d="M2 3h20v19H2z" fill="#fff" stroke="#555"/><path d="M2 3h20v4H2z" fill="#5838b8"/><path d="M2 11h20M2 15h20M2 18h20M7 7v15M12 7v15M17 7v15" stroke="#999"/><path d="M17 14l5 9h-10z" fill="#fff" stroke="#c01818"/></svg></button>
<button class="b" aria-label="点组"><svg><path d="M1 21V5l3-2h6l2 2h11l-4 14z" fill="#ffe078" stroke="#a88820"/><path d="M16 6v8M12 10h8M9 14v8M5 18h8M19 16v8M15 20h8" stroke="#c81818" stroke-width="1.500"/></svg></button>
<button class="b" aria-label="圆组"><svg><path d="M1 20V5l3-2h6l2 2h11l-4 14z" fill="#ffe078" stroke="#a88820"/><circle cx="16" cy="9" r="4" stroke="#111"/><circle cx="9" cy="18" r="4" stroke="#111"/><circle cx="19" cy="19" r="4" stroke="#111"/></svg></button>
<div class="more"><i class="dn"></i></div></div>

<div class="bar last"><i class="grip"></i>
<button class="b" aria-label="锁定部件"><svg><use href="#gold"/><use href="#lock"/></svg></button>
<button class="b" aria-label="解锁部件"><svg><use href="#gold"/><use href="#lock"/></svg></button>
<div class="more m14"><i class="dn"></i></div></div>
</div>

<div class="row">
<div class="bar"><i class="grip"></i>
<button class="b t" aria-label="红块"><svg><path d="M3 7l5-4h13v13l-5 4H3z" fill="#ddd" stroke="#999"/><path d="M6 8l6-3 6 3v8l-6 4-6-4z" fill="#c81020"/><path d="M6 8l6 3 6-3-6-3z" fill="#f08080"/></svg></button>
<button class="b t" aria-label="绿面"><svg><path d="M12 3l11 9-11 9L1 12z" fill="#fff" stroke="#555"/><path d="M12 6l7 6-7 6-7-6z" fill="#18e018" stroke="#186018"/></svg></button>
<button class="b t" aria-label="块"><svg><use href="#block"/></svg></button>
<button class="b t" aria-label="移动块"><svg><path d="M2 12l3-3h6v10H2zM13 12l3-3h6v10h-9z" fill="#fff" stroke="#555"/><path d="M11 10h3v10h-3z" fill="#60d060"/><path d="M2 4h7M4 2L1 4l3 2M15 4h7M20 2l3 2-3 2" stroke="#d01818"/></svg></button>
<button class="b t" aria-label="对合"><svg><path d="M1 21V11h9v10zM14 21V11h9v10z" fill="#fff" stroke="#2020c0"/><path d="M1 11V6q4-8 9 0v5zM14 11V6q5-8 9 0v5z" fill="#c81020"/><path d="M12 2v21" stroke="#d01818" stroke-width="2"/><path d="M5 6v6M19 6v6" stroke="#fff" stroke-width="2"/></svg></button>
<button class="b t" aria-label="颜色"><svg><path d="M3 3h6v6H3z" fill="#d01018"/><path d="M9 3h6v6H9z" fill="#ffe800"/><path d="M15 3h6v6h-6z" fill="#1828d0"/><path d="M3 9h6v6H3z" fill="#18c828"/><path d="M9 9h6v6H9z" fill="#fff"/><path d="M15 9h6v6h-6z" fill="#18b8f8"/><path d="M3 15h6v6H3z" fill="#111"/><path d="M9 15h6v6H9z" fill="#20d0c0"/><path d="M15 15h6v6h-6z" fill="#109020"/></svg></button>
<button class="b t" aria-label="模架"><svg><path d="M3 5q-4-4 2-2h14q6-2 2 2v14q4 4-2 2H5q-6 2-2-2z" fill="#fff" stroke="#3434c0"/><path d="M12 2v20M1 12h22" stroke="#d02020" stroke-dasharray="4 1"/></svg></button>
<button class="b t" aria-label="蓝线"><svg><path d="M2 5l18 14" stroke="#2828b8" stroke-width="1.500"/></svg></button>
<button class="b t" aria-label="圆心线"><svg><circle cx="12" cy="12" r="9" stroke="#3434c0"/><path d="M12 0v24M0 12h24" stroke="#d02020" stroke-dasharray="5 1 1 1"/></svg></button>
<button class="b t" aria-label="平行线"><svg><path d="M2 4l18 16" stroke="#d02020" stroke-width="1.500"/><path d="M8 3l14 13M2 10l14 12" stroke="#3434c0" stroke-dasharray="3 1"/></svg></button>
<button class="b t" aria-label="十字板"><svg><path d="M3 4h18v16H3z" fill="#fff" stroke="#3434c0"/><path d="M12 1v22M1 12h22" stroke="#d02020"/></svg></button>
<button class="b t" aria-label="彩层"><svg><ellipse cx="12" cy="5" rx="8" ry="2" fill="#fff" stroke="#6a8"/><path d="M2 10h20" stroke="#d01018" stroke-width="3"/><path d="M2 13h20" stroke="#ffa000" stroke-width="2"/><path d="M2 16h20" stroke="#18a028" stroke-width="2"/><path d="M2 19h20" stroke="#1828d0" stroke-width="2"/><path d="M2 22h20" stroke="#402080"/></svg></button>
<button class="b t" aria-label="N块"><svg><use href="#block"/><path d="M5 18v-7l8 7v-7" stroke="#d01018" stroke-width="2"/></svg></button>
<button class="b t" aria-label="坐标系"><svg><path d="M5 3v14l13-11M5 17l13 6" stroke="#c81828"/><path d="M5 17l5-4M5 17V9" stroke="#c81828" stroke-width="2"/></svg></button>
<button class="b t" aria-label="基准"><svg><path d="M1 9l15-7 7 13-14 8z" fill="#fff" stroke="#3434c0"/><path d="M6 4l10 17M4 17l16-8M8 3v9l9-4" stroke="#c81828"/></svg></button>
<button class="b t" aria-label="基准块"><svg><path d="M1 8l6-6h16v13l-5 7H1z" fill="#fff" stroke="#50e0d8" stroke-width="2"/><path d="M6 6v11l12-11M6 17h12" stroke="#c81828" stroke-width="1.500"/></svg></button>
<button class="b t" aria-label="删除"><svg><path d="M4 5l16 14M20 5L4 19" stroke="#d01018" stroke-width="5"/></svg></button>
<button class="b t" aria-label="组"><svg><path d="M1 19V8h4l2 2h6v3z" fill="#e0b010" stroke="#906800"/><path d="M1 19l3-7h10l-2 7z" fill="#f8d840" stroke="#906800"/><text x="13" y="16" class="cn">组</text></svg></button>
<button class="b t" aria-label="清理"><svg><path d="M11 2h2v9h-2z" fill="#2830a0" stroke="#181860"/><path d="M8 11h8l4 10H4z" fill="#e0a020" stroke="#805008"/><path d="M10 14l-2 7M14 14l2 7M7 14h10" stroke="#a03010"/></svg></button>
<button class="b t" aria-label="偏置10"><svg><path d="M2 13l4-3h12v7l-4 5H2zM2 13h12v9M14 13l4-3" fill="#fff" stroke="#2626c8"/><text x="7" y="8" class="tiny">10</text><path d="M2 12l4-6M18 10l4-6" stroke="#c81828"/></svg></button>
<div class="more m28"><span>»</span><i class="dn"></i></div></div>

<div class="bar"><i class="grip"></i>
<button class="b" aria-label="检查"><svg><path d="M1 1h5v3h4V1h5v7H1z" fill="#6070c8" stroke="#283880"/><path d="M5 8h6v5H5z" fill="#8838c0"/><path d="M4 14l6 8L23 6" stroke="#20d830" stroke-width="4"/></svg></button>
<button class="b" aria-label="装配树"><svg><path d="M8 1h4v2h5V1h3v6H8z" fill="#6070c8" stroke="#283880"/><path d="M1 7h4v4H1zM1 17h4v5H1zM3 11v8h6" fill="#e8e0a0" stroke="#444"/><path d="M11 8h12v15H11z" fill="#e8ecff" stroke="#5068b0"/><path d="M13 12h8M13 16h8M13 20h8" stroke="#7888c0"/><path d="M13 7h3v6h-3z" fill="#8838c0"/></svg></button>
<button class="b" aria-label="清单"><svg><path d="M1 2h21v19H1z" fill="#fff" stroke="#222"/><path d="M1 5h21M1 9h21M1 13h21M1 17h21M7 2v19" stroke="#222"/><path d="M1 11h20M1 15h10" stroke="#f0e020" stroke-width="2"/><path d="M12 9h3v2h5V9h3v6H12z" fill="#6070c8" stroke="#283880"/><path d="M16 15h3v8h-3z" fill="#8838c0"/></svg></button>
<div class="more m38"><span>»</span><i class="dn"></i></div></div>

<div class="bar last"><i class="grip"></i>
<button class="b t" aria-label="平移线"><svg><path d="M3 15L14 4" stroke="#d01828" stroke-width="2"/><path d="M9 21L21 9" stroke="#111" stroke-width="2"/></svg></button>
<button class="b t" aria-label="两点线"><svg><path d="M4 20L17 7" stroke="#d01828" stroke-width="2"/><circle cx="4" cy="20" r="2" fill="#2020d0"/><circle cx="18" cy="5" r="2" fill="#2020d0"/></svg></button>
<button class="b t" aria-label="旋转"><svg><path d="M10 4q11-2 11 9-2 9-10 8-6-1-7-6" stroke="#d01828" stroke-width="2"/><path d="M12 0v8L6 4z" fill="#d01828"/><circle cx="12" cy="13" r="1" fill="#2020d0"/></svg></button>
<button class="b t" aria-label="坐标锁"><svg><path d="M4 6v12l9-5M4 18l9 5" stroke="#8020a0" stroke-width="1.500"/><path d="M12 8h9v6h-9zM14 8V4q3-4 6 0M12 11h9" stroke="#8020a0" stroke-width="1.500"/></svg></button>
<button class="b t" aria-label="四腔"><svg><path d="M2 3h7v7H2zM15 3h7v7h-7zM2 15h7v7H2zM15 15h7v7h-7z" fill="#fff" stroke="#3434d0" stroke-width="1.500"/><path d="M12 1v22M1 12h22" stroke="#d02020"/></svg></button>
<button class="b t" aria-label="实四腔"><svg><path d="M2 3h7v7H2zM15 3h7v7h-7zM2 15h7v7H2zM15 15h7v7h-7z" fill="#703020" stroke="#20209c" stroke-width="1.500"/><path d="M12 1v22M1 12h22" stroke="#d02020"/></svg></button>
<button class="b t" aria-label="矩形移动"><svg><path d="M10 11h9v7h-9z" stroke="#c03040"/><path d="M5 17V6M3 8l2-4 2 4" stroke="#c03040"/></svg></button>
<button class="b t" aria-label="平行复制"><svg><path d="M2 15L13 4" stroke="#d01828" stroke-width="2"/><path d="M6 21L18 9" stroke="#111" stroke-width="2"/><path d="M15 2h6v6h-6z" fill="#fff" stroke="#3434d0"/></svg></button>
<button class="b t" aria-label="点对点"><svg><path d="M3 20L15 9" stroke="#d01828" stroke-width="2"/><circle cx="3" cy="21" r="2" fill="#2020d0"/><path d="M10 2h6v6h-6z" fill="#fff" stroke="#3434d0"/><path d="M15 7h4v3" stroke="#2020d0" stroke-width="2"/></svg></button>
<button class="b t" aria-label="旋转复制"><svg><path d="M10 4q11-2 11 9-2 9-10 8-6-1-7-6" stroke="#d01828" stroke-width="2"/><path d="M12 0v8L6 4z" fill="#d01828"/><path d="M8 9h8v7H8z" fill="#fff" stroke="#3434d0"/></svg></button>
<button class="b t" aria-label="坐标复制"><svg><path d="M3 5v13l9-5M3 18l9 4" stroke="#d01828" stroke-width="1.500"/><path d="M12 6h8v6h-8zM13 6V2h6v4" stroke="#3434d0" stroke-width="1.500"/><path d="M14 16h8v6h-8z" fill="#fff" stroke="#3434d0"/></svg></button>
<button class="b t" aria-label="环形阵列"><svg><g fill="#fff" stroke="#3434d0"><path d="M10 3h3v3h-3zM10 18h3v3h-3zM3 10h3v3H3zM18 10h3v3h-3zM5 5h3v3H5zM16 5h3v3h-3zM5 16h3v3H5zM16 16h3v3h-3z"/></g><path d="M12 9v6M9 12h6" stroke="#d02020"/></svg></button>
<button class="b t" aria-label="绿四腔"><svg><path d="M3 3h6v6H3zM15 3h6v6h-6zM3 15h6v6H3zM15 15h6v6h-6z" fill="#20e030" stroke="#205030" stroke-width="1.500"/><path d="M12 1v22M1 12h22" stroke="#d02020"/></svg></button>
<button class="b t" aria-label="平移复制"><svg><path d="M10 11h9v7h-9z" fill="#fff" stroke="#3434d0"/><path d="M5 17V6M3 8l2-4 2 4" stroke="#111"/></svg></button>
<button class="b t" aria-label="绕点旋转"><svg><path d="M10 5q11-3 11 8-2 9-10 8-6-1-7-6" stroke="#d01828" stroke-width="2"/><path d="M13 1v8L8 5z" fill="#d01828"/><path d="M3 1h6v6H3z" fill="#fff" stroke="#3434d0"/><circle cx="12" cy="13" r="1" fill="#2020d0"/></svg></button>
<button class="b t" aria-label="缩放复制"><svg><path d="M3 5h8v6H3z" fill="#fff" stroke="#3434d0"/><path d="M11 12l8 5" stroke="#20c040" stroke-dasharray="2 1"/><circle cx="20" cy="18" r="1" fill="#d02020"/></svg></button>
<div class="more m14"><i class="dn"></i></div></div>
</div>

<div class="row filter">
<select class="s1" aria-label="类型过滤器"><option>实体</option></select>
<select class="s2" aria-label="选择范围"><option>整个装配</option></select>
<div class="fl">
<button class="c" aria-label="多选"><svg><path d="M2 9h6v8H2zM9 11h5v7H9z" fill="#999"/><circle cx="5" cy="5" r="3" class="g2"/><circle cx="12" cy="6" r="3" class="g2"/><circle cx="16" cy="3" r="2" class="g2"/></svg></button><i class="sep"></i>
<button class="c" aria-label="重置过滤器"><svg><path d="M1 7l6-4v2h5v4H7v2z" fill="#3ca890"/><path d="M8 10h9l-3 4v5l-3-2v-3z" fill="#f0c830" stroke="#a08010"/></svg></button>
<button class="c" aria-label="意图"><svg><path d="M2 3h15v14H2z" stroke="#d03030"/><path d="M9 4v10M4 9h10" stroke="#444"/><circle cx="9" cy="9" r="3" stroke="#444"/><path d="M9 10h8l-3 7-2-2z" fill="#f0c830"/></svg></button><i class="dn"></i>
<button class="c" aria-label="上一选择"><svg><path d="M2 7q4-6 8 0M2 3v4h4M14 8v10M9 13h10" class="g"/><circle cx="14" cy="13" r="3" class="g"/></svg></button>
<button class="c" aria-label="链"><svg><path d="M2 3l10-1 3 5 1 10-4 1V9L8 7 3 8z" fill="#999"/></svg></button><i class="sep"></i>
<button class="c" aria-label="矩形选择"><svg><path d="M4 4h13v12H4z" stroke="#111" stroke-dasharray="2 1"/><path d="M15 14h4v4h-4z" fill="#c02030"/></svg></button><i class="dn"></i><i class="sep"></i>
<button class="c" aria-label="线框"><svg><path d="M2 12l4-7 8-2 5 6-1 6-7 3-9-2z" fill="#eee" stroke="#333"/><path d="M2 12l8 2 4-7 5 2M10 14v4M6 5l8 2" stroke="#333"/></svg></button>
<button class="c" aria-label="体"><svg viewBox="0 0 24 24"><use href="#cube"/></svg></button><i class="sep"></i>
<button class="c" aria-label="启用捕捉"><svg><path d="M1 3l4 2-4 3z" fill="#20a030"/><path d="M1 11l4 3-4 3z" fill="#c02020"/><g fill="#e8d820" stroke="#222"><circle cx="12" cy="4" r="2"/><circle cx="12" cy="15" r="2"/><circle cx="7" cy="10" r="2"/><circle cx="17" cy="10" r="2"/></g><path d="M9 7l6 6M15 7l-6 6" stroke="#222"/></svg></button>
<button class="c" aria-label="清除捕捉"><svg><circle cx="9" cy="8" r="5" class="g"/><path d="M9 1v14M2 8h14" class="g"/><path d="M9 12l8-2v5l-5 3z" fill="#999"/></svg></button>
<button class="c" aria-label="端点"><svg><path d="M4 16L15 5" class="g"/><circle cx="16" cy="4" r="2" fill="#999"/></svg></button>
<button class="c" aria-label="中点"><svg><path d="M3 17L17 3" class="g"/><circle cx="10" cy="10" r="2" fill="#999"/></svg></button>
<button class="c" aria-label="控制点"><svg><path d="M3 3q8 0 7 6t7 7" class="g"/><circle cx="9" cy="4" r="2" fill="#999"/></svg></button>
<button class="c" aria-label="交点"><svg><path d="M10 2v16M2 12q8-7 16 0" class="g"/></svg></button>
<button class="c" aria-label="圆心"><svg><circle cx="10" cy="10" r="7" class="g"/><circle cx="10" cy="10" r="1" class="g"/></svg></button>
<button class="c" aria-label="象限点"><svg><circle cx="10" cy="10" r="6" class="g"/><path d="M8 2h4v3H8zM8 15h4v3H8zM2 8h3v4H2zM15 8h3v4h-3z" fill="#999"/></svg></button>
<button class="c" aria-label="现有点"><svg><path d="M10 3v14M3 10h14" class="g"/></svg></button>
<button class="c" aria-label="曲线上点"><svg><path d="M4 16L16 4" class="g"/><circle cx="6" cy="15" r="2" fill="#999"/></svg></button>
<button class="c" aria-label="面上点"><svg><path d="M3 7q4-6 14-4l-1 6q-3-1-4 8l-5-2-4-1z" fill="#8c8c8c"/></svg></button><i class="sep"></i>
<button class="c" aria-label="网格点"><svg><path d="M5 3l10 3v12L5 15zM8 4v12M12 5v12M5 7l10 3M5 11l10 3" class="g"/></svg></button>
</div>
<div class="more m14"><i class="dn"></i></div>
</div>

<div class="row status">
<span class="cue"></span><span class="stat"></span><span class="cell"></span><span class="cell wide"></span>
<button class="c" aria-label="草图状态"><svg class="i16"><path d="M0 0h16v16H0z" fill="#84959a"/><path d="M3 4l9 2v6l-8-2z" fill="#78868a"/></svg></button>
<button class="c" aria-label="全屏"><svg class="i16"><path d="M3 4h10v8H3z" fill="#4888d0" stroke="#223"/><path d="M4 5h8" stroke="#fff"/><path d="M1 4V1h3M12 1h3v3M15 12v3h-3M4 15H1v-3" stroke="#444" stroke-width="2"/></svg></button>
</div>

<main class="main">
<aside class="tabs">
<button aria-label="装配导航器"><svg><g fill="#f8d840" stroke="#a88400"><path d="M3 3l4-2 4 1v5l-3 2-5-1z"/><path d="M2 8l4-2 3 1v5l-3 1-4-1z"/><path d="M8 8l4-2 3 1v4l-3 2-4-1z"/><path d="M13 17l4-2 5 1v4l-3 3-6-1z"/></g><path d="M15 12h8M5 14v10M5 19h6" stroke="#1a1a90"/></svg></button>
<button aria-label="约束导航器"><svg><path d="M4 1l7 5-7 5zM19 1l-7 5 7 5z" fill="#1818b0"/><path d="M11 0v24" stroke="#111" stroke-dasharray="3 1"/><path d="M1 15h8v8H1z" fill="#ffff60" stroke="#666600"/><path d="M13 14l9 9h-9z" fill="#b01020"/></svg></button>
<button aria-label="部件导航器"><svg><path d="M1 3v7q5 3 10 0V3z" fill="url(#P)" stroke="#802080"/><ellipse cx="6" cy="3" rx="5" ry="2" fill="#f4d8f8" stroke="#802080"/><path d="M13 9h9" stroke="#111"/><path d="M5 12v11M5 18h6" stroke="#1a1a90"/><circle cx="16" cy="18" r="4" stroke="#802080"/><circle cx="16" cy="18" r="1" stroke="#802080"/></svg></button>
<button aria-label="重用库"><svg><path d="M0 7l5-5h17v16l-5 5H0z" fill="#f4f4f4" stroke="#777"/><path d="M0 7h6v16H0z" fill="#f8b060" stroke="#a05010"/><path d="M6 7h6v16H6z" fill="#60e060" stroke="#107010"/><path d="M12 7h6v16h-6z" fill="#78b8f4" stroke="#2058a0"/><path d="M18 7l5-5v16l-5 5z" fill="#2870c0"/><path d="M6 7l5-5M12 7l5-5M0 11h5M0 19h5M7 11h4M7 19h4M13 12h4M13 18h4" stroke="#666"/></svg></button>
<button class="gap" aria-label="HD3D工具"><svg><circle cx="8" cy="16" r="8" fill="#2878d0"/><path d="M8 10v2M6 14h2v6M5 21h7" stroke="#fff" stroke-width="2"/><path d="M8 5q9 0 11 11M8 1q13 1 15 14" stroke="#4868c0" stroke-width="2"/></svg></button>
<button class="gap" aria-label="浏览器"><svg><path d="M4 2h11l6 6v15H4z" fill="#f6faff" stroke="#4868b0"/><path d="M15 2v6h6" stroke="#4868b0"/><circle cx="12" cy="15" r="6" fill="#38a048"/><path d="M12 9l4 9-4 2-3-2z" fill="#a8d8ff"/></svg></button>
<button class="act" aria-label="历史记录"><svg><circle cx="11" cy="12" r="10" fill="#d8e8f8" stroke="#777" stroke-width="2"/><circle cx="11" cy="12" r="7" stroke="#223" stroke-dasharray="1 2.700"/><path d="M11 5v7h6" stroke="#111" stroke-width="1.500"/></svg></button>
<button aria-label="角色"><svg><use href="#page"/><circle cx="11" cy="8" r="2" fill="#2888e0"/><circle cx="11" cy="12" r="2" fill="#38b038"/><circle cx="11" cy="16" r="2" fill="#c02020"/><path d="M15 8h5M15 12h5M15 16h5" stroke="#555"/></svg></button>
<button aria-label="系统可视化"><svg><path d="M2 1h8v22H2z" fill="url(#R)"/><path d="M13 10l7 11" stroke="#111" stroke-width="3"/><path d="M9 2l2 3 4-1-2 4 2 3-4-1-3 3v-4L5 7l4-1z" fill="#fff"/></svg></button>
<button aria-label="系统场景"><svg><path d="M3 4h7v14H3z" fill="#4890d8"/><path d="M10 5h13l-5 4h-8M1 19q10 3 16-1" stroke="#4068b0"/><path d="M13 10l7 11" stroke="#111" stroke-width="3"/><path d="M9 2l2 3 4-1-2 4 2 3-4-1-3 3v-4L5 7l4-1z" fill="#fff"/></svg></button>
<button aria-label="用户"><svg><path d="M12 17q0-8 5-8 6 0 6 8z" fill="#289038"/><circle cx="16" cy="5" r="5" fill="#f0c080" stroke="#a87020"/><path d="M0 23q0-8 7-8t7 8z" fill="#8048c0"/><circle cx="7" cy="12" r="5" fill="#504030"/><circle cx="7" cy="13" r="3" fill="#f4c8a0"/></svg></button>
<button aria-label="图库"><svg><use href="#page"/><path d="M9 6h12v10H9z" fill="#d03020"/><path d="M12 6h6v10h-6z" fill="#98c8f8"/><path d="M10 15h10" stroke="#f0a040" stroke-width="2"/></svg></button>
</aside>
<div class="strip"></div>

<section class="view">
<svg viewBox="0 0 1225 666" aria-label="BM17008 模型">
<g stroke="#2a2410" stroke-linejoin="round">
<path d="M727 85L332 269l164 245 395-184z" fill="#f7d50d"/>
<path d="M332 269l12 78 164 245-12-78z" fill="#855203"/>
<path d="M496 514l12 78 395-185-12-77z" fill="#855203"/>
</g>
<path d="M429 299C429 283 444 268 462 258C520 227 600 190 640 175C663 166 676 162 688 162C712 162 722 172 732 189L779 261C790 279 795 288 795 300C795 318 780 328 760 337L590 418C570 428 553 436 538 436C515 436 505 427 494 411L443 332C434 319 429 310 429 299Z" fill="#0f6a10" stroke="#0a3a0a"/>
<path d="M430 297C430 283 445 269 463 259C521 228 601 191 641 176C663 167 676 163 688 163C711 163 721 172 731 189L778 261C788 277 793 286 793 297C793 313 779 323 759 332L588 414C568 424 552 431 538 432C518 432 507 425 496 410L445 331C435 317 430 308 430 297Z" fill="#13f00e" stroke="#0a5a0a"/>
<path d="M438 290C438 280 446 268 456 262C500 233 570 203 622 182C645 172 660 167 674 166C690 165 700 172 700 183C699 196 688 203 675 209L582 249L484 297C474 302 465 303 457 302C445 301 438 297 438 290Z" fill="url(#G)" stroke="#0a7a0a"/>
<path d="M454 284C456 276 468 269 482 263L581 216L660 181C670 177 681 174 685 178C687 183 678 188 670 192L577 236L475 283C465 287 453 290 454 284Z" fill="#14e60f" stroke="#093c09" stroke-width="1.500"/>
<path d="M558 217l6 8M574 239l5 11" stroke="#0a5a0a"/>
<path d="M486 270.500L665.500 187" stroke="#3a3a08" stroke-width="5" stroke-linecap="round" stroke-dasharray="0 15.227"/>
<path d="M486 270.500L665.500 187" stroke="#f8d020" stroke-width="3.500" stroke-linecap="round" stroke-dasharray="0 15.227"/>
<path d="M610 296l-23-34 9 9z" fill="#dff4dc" stroke="#d0eccc"/>
<path d="M611 297l-5-20 0-10 4 9z" fill="#1010c0" stroke="#1010c0"/>
<path d="M614 298q20-14 48-22q-9 12-48 22z" fill="#f0a8a0"/>
<text x="590" y="259" class="ax" fill="#1fd01a">YC</text>
<text x="609" y="266" class="ax" fill="#0b80b8">ZC</text>
<text x="644" y="273" class="ax" fill="#b05a10">XC</text>
<circle cx="906" cy="164" r="29" fill="#e6fb0c"/>
<circle cx="907" cy="164" r="11" stroke="#222" stroke-dasharray="11.300 6" stroke-dashoffset="-3"/>
<path d="M906 149h2v14h14v2h-14v14h-2v-14h-14v-2h14z" fill="#f4ff80" stroke="#111"/>
<g stroke="#aaa" opacity=".7"><path d="M44 579l19-8 12 25M51 592l16-4 9-9M63 571l9 8"/></g>
<path d="M55 608L40 586" stroke="#3c8c3c" stroke-width="2"/><path d="M38 582l7 6-4 3z" fill="#3c9c3c"/>
<path d="M55 607l-3-14" stroke="#1020a0" stroke-width="4"/><path d="M51 585l5 10h-8z" fill="#1020a0"/>
<path d="M58 606l22-9" stroke="#b83848" stroke-width="2"/><path d="M89 593l-13 1 3 6z" fill="#c02838"/>
<circle cx="55" cy="609" r="4" fill="#e0e0e0" stroke="#999"/>
<text x="32" y="584" class="tri" fill="#3c9c3c">Y</text><text x="48" y="587" class="tri" fill="#4848d8">Z</text><text x="89" y="596" class="tri" fill="#c82848">X</text>
</svg>
</section>

<aside class="rbar">
<div class="vbar"><i class="hgrip"></i>
<div><button class="b" aria-label="移动面"><svg><use href="#face"/><path d="M14 8v14M7 15h14M11 11l3-3 3 3M11 19l3 3 3-3M10 12l-3 3 3 3M18 12l3 3-3 3" stroke="#fff" stroke-width="3"/><path d="M14 8v14M7 15h14M11 11l3-3 3 3M11 19l3 3 3-3M10 12l-3 3 3 3M18 12l3 3-3 3" stroke="#111"/></svg></button><i class="dn"></i></div>
<div><button class="b" aria-label="拉出面"><svg><use href="#face"/><path d="M1 10q2-8 11-6l8 2q-8 1-8 10l-11-3z" fill="url(#O)" stroke="#b04010"/><path d="M15 13l6 10H9z" fill="#fff" stroke="#111"/></svg></button><i class="dn"></i></div>
<div><button class="b" aria-label="删除面"><svg><use href="#face"/><path d="M10 10l12 11M23 10L10 22" stroke="#222" stroke-width="2"/></svg></button></div>
<div><button class="b" aria-label="复制面"><svg><use href="#face"/><path d="M10 7h5l3 3v8h-8zM15 12h5l3 3v8h-8z" fill="#eef2ff" stroke="#4858b0"/></svg></button><i class="dn"></i></div>
<div><button class="b" aria-label="阵列面"><svg><use href="#face"/><path d="M15 7l6-1v7l-6 1zM15 16l6-1v6l-6 1z" fill="#f8f8ff" stroke="#222"/></svg></button><i class="dn"></i></div>
<div><button class="b" aria-label="尺寸面"><svg><use href="#face"/><path d="M7 15h17v9H7z" fill="#eee"/><path d="M8 15v9M23 15v9M9 19h13M12 17l-3 2 3 2M19 17l3 2-3 2M13 9l5 5M18 9l-5 5" stroke="#111"/></svg></button><i class="dn"></i></div>
<div><button class="b" aria-label="成组面"><svg><use href="#face"/><path d="M12 11h12v13H12z" fill="#eee"/><path d="M13 13h7v7h-7zM16 16h7v7h-7z" stroke="#111" stroke-width="1.500"/><path d="M11 11h3v3h-3zM22 11h3v3h-3zM11 21h3v3h-3z" fill="#1818a0"/></svg></button></div>
<div><button class="b" aria-label="横截面编辑"><svg><path d="M2 6l10-4 10 4v12l-10 5-10-4zM2 6l10 4 10-4M12 10v13" fill="#f4e4fa" stroke="#c080c8"/><path d="M14 8l4-2v13l-4 2z" fill="#f8b090" stroke="#d04020"/><path d="M7 12l6 10H1z" fill="#fff" stroke="#111"/></svg></button></div>
<i class="lf"></i></div>
<div class="vbar"><i class="hgrip"></i>
<button class="b t" aria-label="螺钉"><svg><path d="M8 3h8v5h-2v11l-2 3-2-3V8H8z" fill="#f0b830" stroke="#2424b8" stroke-width="1.500"/><path d="M12 1v22" stroke="#d02020"/></svg></button>
<button class="b t" aria-label="拉杆"><svg><path d="M8 2h8v5h-2v10h2v5H8v-5h2V7H8z" fill="#f0b830" stroke="#2424b8" stroke-width="1.500"/><path d="M12 1v22" stroke="#d02020"/></svg></button>
<button class="b t" aria-label="水路"><svg><path d="M4 7h14v4H7v3h11v4H7" stroke="#3c50b0" stroke-width="1.500"/><path d="M2 5h4v4H2zM18 17h4v4h-4z" fill="#303c90"/></svg></button>
<button class="b t" aria-label="镶件"><svg><path d="M2 5h20v14h-2q-8-8-16 0H2z" fill="#e0dcf0" stroke="#3434c0" stroke-width="1.500"/><path d="M5 16q7-6 14 0" stroke="#d02020" stroke-dasharray="2 1"/></svg></button>
<button class="b" aria-label="弯管"><svg><path d="M2 19l8-4V5l11 4" stroke="#407890" stroke-width="4"/><path d="M2 19l8-4V5l11 4" stroke="#e8f4f4" stroke-width="2"/><path d="M11 6v9" stroke="#d02020" stroke-width="2"/></svg></button>
<button class="b t" aria-label="水嘴"><svg><path d="M8 2h8v5h2v5h-2v3h1v3h-1v4H8v-4H7v-3h1v-3H6V7h2z" fill="#fff" stroke="#3434c0" stroke-width="1.500"/><path d="M12 1v22M7 15h10M7 18h10" stroke="#3434c0"/></svg></button>
<button class="b t" aria-label="定位环"><svg><ellipse cx="12" cy="9" rx="9" ry="7" fill="#fff040" stroke="#555"/><ellipse cx="12" cy="9" rx="5" ry="4" fill="#ddd" stroke="#555"/><path d="M12 0v24M2 9h20" stroke="#d02020"/><path d="M3 20h18" stroke="#3434c0" stroke-width="2"/></svg></button>
<button class="b t" aria-label="顶针"><svg><path d="M7 18V8q5-12 10 0v10z" fill="#fff" stroke="#3434c0"/><path d="M11 8h3v10h-3z" fill="#907020"/><path d="M5 18h14v4H5z" fill="#60e0f0" stroke="#2060b0"/></svg></button>
<button class="b t" aria-label="斜顶"><svg><path d="M4 20V6l3-4 2 4v14zM16 20V6l3-4 2 4v14z" fill="#fff" stroke="#3434c0"/><path d="M6 2v20M19 2v20" stroke="#d02020"/><path d="M9 17l7-6" stroke="#806020" stroke-width="3"/></svg></button>
<button class="b t" aria-label="支撑柱"><svg><path d="M8 2h8v5h-2v10h2v5H8v-5h2V7H8z" fill="#fff" stroke="#3434c0" stroke-width="1.500"/><path d="M12 3v18" stroke="#d05060"/></svg></button>
<button class="b t" aria-label="滑块"><svg><path d="M3 8h18v13H5z" fill="#fff" stroke="#3434c0" stroke-width="1.500"/><path d="M4 3h16l-6 6v5h-4V9z" fill="#208060" stroke="#104030"/><path d="M2 9h20" stroke="#2424b0" stroke-width="2"/></svg></button>
<button class="b t" aria-label="杯形"><svg><path d="M2 3h20l-4 19H6z" fill="#fff" stroke="#3434c0" stroke-width="1.500"/><path d="M8 3h8v6H8z" fill="#20d860" stroke="#108040"/><path d="M12 1v22" stroke="#d02020" stroke-dasharray="3 1"/></svg></button>
<i class="lf"></i></div>
</aside>
</main>

<footer class="row foot">
<div class="bar"><i class="grip"></i>
<button class="b" aria-label="创建草图"><svg><path d="M2 1l16 4v18L2 19z" fill="#fff" stroke="#222" stroke-width="1.500"/><path d="M4 5l5 1v5l-5-1zM4 13l4 1v4l-4-1zM10 13l6 1v5l-6-1z" stroke="#222"/><path d="M18 1l1 4 5 0-4 3 2 4-4-2-4 2 1-4-4-3h5z" fill="#f0f020"/></svg></button>
<button class="lbl sk" disabled><svg><path d="M0 0h24v24H0z" fill="#84979e"/><path d="M3 7q5-3 9 0t9-2l-2 9q-4 3-8 0t-7 1z" fill="#606c70"/><path d="M6 7l3 7M12 7l2 7M17 6l1 8M4 11h15" stroke="#94a4a8"/></svg>完成草图</button>
<button class="b" aria-label="轮廓"><svg><path d="M3 1v12q0 7 5 7t5-7q-1-7 4-7 5 1 4 12" stroke="#111" stroke-width="1.500"/><circle cx="3" cy="13" r="2" fill="#c01020"/><circle cx="12" cy="13" r="2" fill="#c01020"/><circle cx="21" cy="13" r="2" fill="#c01020"/></svg></button>
<button class="b" aria-label="草图直线"><svg><path d="M4 20L20 4" stroke="#111"/><circle cx="4" cy="20" r="2" fill="#c01020"/><circle cx="20" cy="4" r="2" fill="#c01020"/></svg></button>
<button class="b" aria-label="草图圆弧"><svg><path d="M3 4q18-1 18 16" stroke="#111"/><circle cx="3" cy="4" r="2" fill="#c01020"/><circle cx="16" cy="8" r="2" fill="#c01020"/><circle cx="21" cy="20" r="2" fill="#c01020"/></svg></button>
<button class="b" aria-label="圆"><svg><circle cx="12" cy="12" r="10" stroke="#111"/></svg></button>
<button class="b" aria-label="圆角"><svg><path d="M1 2h8q12 1 13 20" class="g"/><path d="M10 2h12v10" class="g" stroke-dasharray="1 1"/></svg></button>
<button class="b" aria-label="倒角"><svg><path d="M1 2h10l11 9v11" class="g"/><path d="M12 2h10v8" class="g" stroke-dasharray="1 1"/></svg></button>
<button class="b" aria-label="矩形"><svg><path d="M3 5h19v13H3z" stroke="#111"/><circle cx="3" cy="5" r="2" fill="#c01020"/><circle cx="22" cy="18" r="2" fill="#c01020"/></svg></button>
<button class="b" aria-label="样条"><svg><path d="M2 12L7 3M15 20l7-10M2 12q3-5 6-3l7 5q4 1 7-4" class="g"/><g fill="#888"><circle cx="2" cy="12" r="2"/><circle cx="7" cy="3" r="2"/><circle cx="15" cy="20" r="2"/><circle cx="22" cy="10" r="2"/></g><circle cx="7" cy="9" r="2" fill="#c01020"/><circle cx="15" cy="14" r="2" fill="#c01020"/></svg></button>
<button class="b" aria-label="点"><svg><path d="M12 3v18M3 12h18" stroke="#111" stroke-width="1.500"/></svg></button>
<button class="b" aria-label="草图偏置"><svg><path d="M2 22V7l6-5h7v5q9 3 8 9-2 6-8 6z" class="g"/><path d="M6 18V9l4-3v5q8 0 9 4 0 3-4 3z" class="g"/></svg></button><i class="dn"></i><i class="sep"></i>
<button class="b" aria-label="快速修剪"><svg><path d="M5 1l8 22M1 15h12" class="g"/><path d="M12 11l7-6 3 5-5 6z" fill="#999"/></svg></button>
<button class="b" aria-label="快速延伸"><svg><path d="M5 1l10 22M1 15h22" class="g"/><path d="M12 15l8-12 3 3-9 10z" fill="#a4a488"/></svg></button>
<button class="b" aria-label="制作拐角"><svg><path d="M15 0v23M1 11h22M8 5l13 10" class="g"/></svg></button><i class="sep"></i>
<button class="b" aria-label="自动尺寸"><svg><path d="M1 7v11M22 7v11M2 12h19M5 9l-3 3 3 3M18 9l3 3-3 3" stroke="#777"/><path d="M10 12l9-12-3 8h4l-9 9 2-6z" fill="#a8a890"/></svg></button><i class="dn"></i><i class="sep"></i>
<button class="b" aria-label="几何约束"><svg><path d="M1 12l9-9M5 12l9-9M17 7v11M11 18h12" class="g"/></svg></button>
<button class="b" aria-label="对称约束"><svg><path d="M6 3H2v17h20V3h-4" stroke="#666" stroke-width="1.500"/><path d="M12 1v22" stroke="#777" stroke-dasharray="4 1"/><path d="M7 2v6h10V2" stroke="#777"/></svg></button>
<button class="b" aria-label="显示约束"><svg><path d="M0 8l6 4-6 5z" fill="#888"/><path d="M8 10l9-9M13 10l9-9M16 13v9M10 22h12" class="g"/></svg></button><i class="dn"></i><i class="sep"></i>
<button class="b" aria-label="转换参考"><svg><path d="M2 2h9v9H2z" stroke="#888"/><path d="M11 13h12v9H11z" stroke="#777"/><path d="M12 12l8-6 2 2-9 8z" fill="#a0a088"/><path d="M1 16h7v7H1z" fill="#999"/></svg></button>
<button class="b" aria-label="备选解"><svg><path d="M9 3q-7-4-8 3 1 6 7 4" class="g" stroke-width="2"/><path d="M2 14l8-4 12 1 1 10-6 3-3-4H3z" fill="#92969e"/><path d="M11 10l8-8 4 2-9 9z" fill="#a4a488"/></svg></button>
<button class="b" aria-label="推断约束"><svg><path d="M9 3q-7-4-8 3 1 6 7 4" class="g" stroke-width="2"/><path d="M10 6l6-2v9l7 4-10 6-11-3v-4l8-3z" fill="#9ca0ac"/></svg></button>
<div class="more m14"><i class="dn"></i></div></div>
</footer>
</div>
</body>
</html>
```
FILE: styles.css
```css
* { box-sizing: border-box; }
body {
  margin: 0;
  min-height: 100vh;
  padding: 64px 301px;
  background: #000;
  color: #111;
  display: flex;
  font: 12px/16px "Noto Sans", "Noto Sans CJK SC", sans-serif;
  text-spacing-trim: space-all;
}
svg { width: 24px; height: 24px; fill: none; flex: none; display: block; }
svg.defs { position: absolute; width: 0; height: 0; }
svg.i16 { width: 16px; height: 16px; }
button {
  border: 0;
  padding: 0;
  margin: 0;
  background: none;
  font: inherit;
  color: inherit;
  display: flex;
  align-items: center;
  justify-content: center;
  white-space: pre;
  flex: none;
}
u { text-underline-offset: 2px; }

/* icon pens */
.g { stroke: #8c8c8c; }
.g2 { stroke: #8c8c8c; stroke-width: 2; }
.w2 { stroke: #fff; stroke-width: 2; }
.d2 { stroke: #555; stroke-width: 2; }
.tiny { font: bold 7px "Liberation Sans", sans-serif; fill: #111; }
.small { font: 12px "Liberation Sans", sans-serif; }
.red { fill: #c81828; }
.cn { font: 10px "Noto Sans CJK SC", sans-serif; fill: #111; }

.window {
  flex: 1;
  min-width: 0;
  display: flex;
  flex-direction: column;
  border: solid #14120f;
  border-width: 0 3px 6px;
  border-bottom-color: #1c1c1c;
  border-radius: 5px 5px 0 0;
  background: #dcdcdc;
  overflow: hidden;
}

/* title bar */
.title {
  height: 30px;
  display: flex;
  align-items: center;
  gap: 6px;
  padding: 0 1px 0 2px;
  background: linear-gradient(#707070, #4c4c4c 10px, #1b1b1b 10px, #1e1e1e 28px, #000 28px);
  color: #f4f4f4;
}
.title h1 { margin: 0; font: inherit; flex: 1; white-space: nowrap; padding-bottom: 2px; }
.title strong { font: 900 13px/16px "Noto Sans", sans-serif; color: #fff; padding-bottom: 2px; margin-right: 22px; }
.wbtns { display: flex; gap: 4px; }
.wbtns button {
  width: 18px;
  height: 19px;
  border: 1px solid #777;
  border-radius: 3px;
  background: linear-gradient(#666, #2c2c2c);
}
.wbtns svg { width: 18px; height: 18px; }
.wbtns .close { background: linear-gradient(#e88080, #c02020); border-color: #d88; }

/* menu bar */
.menu {
  height: 27px;
  display: flex;
  align-items: center;
  background: #e4e4e4;
  padding: 0 5px 2px 0;
}
.menu > button { padding: 0 6px; height: 24px; }
.mdi { display: flex; gap: 2px; margin-left: auto; }
.mdi button { width: 17px; height: 17px; border: 1px solid #666; border-radius: 4px; background: #f2f2f2; }
.mdi svg { width: 16px; height: 16px; }

/* toolbars */
.row {
  height: 34px;
  flex: none;
  display: flex;
  background: linear-gradient(#dfdfdf, #d6d6d6);
  border-top: 1px solid #f6f6f6;
}
.row.in { padding-left: 4px; }
.bar {
  display: flex;
  align-items: center;
  flex: none;
  padding-bottom: 2px;
  background: linear-gradient(#e4e4e4, #d8d8d8);
  border-right: 1px solid #f8f8f8;
  margin-right: -1px;
}
.bar.last { flex: 1 0 auto; margin-right: 0; border-right: 0; }
.grip {
  width: 8px;
  height: 24px;
  flex: none;
  background: radial-gradient(circle, #a8a8a8 1px, #f0f0f0 1px, transparent 2px) 3px 0 / 4px 4px repeat-y;
}
.b { width: 31px; height: 31px; }
.bar .b { padding-right: 1px; }
.t svg { background: #c8c8c8; }
.on { border: 1px solid #444; border-radius: 3px; background: #fff; }
.lbl { height: 31px; }
.lbl svg { margin: 0 3px 0 3px; }
.lbl.start { width: 67px; justify-content: flex-start; }
.lbl.start .dn { width: 10px; }
.lbl.find { width: 93px; justify-content: flex-start; }
.lbl.sk { width: 82px; justify-content: flex-start; color: #999; }
.sep { width: 6px; align-self: stretch; flex: none; background: linear-gradient(#f8f8f8, #f8f8f8) 2px 0 / 1px 100% no-repeat; }
.dn { width: 12px; height: 12px; flex: none; display: flex; align-items: center; justify-content: center; }
.dn::after { content: ""; border: 3px solid transparent; border-top-color: #111; border-bottom: 0; }
.more {
  width: 14px;
  align-self: stretch;
  flex: none;
  display: flex;
  flex-direction: column;
  align-items: flex-end;
  padding: 0 1px 1px 0;
}
.more span { font: bold 14px/12px "Noto Sans", sans-serif; width: 12px; text-align: center; }
.more .dn { margin-top: auto; }
.m14 { margin-left: auto; padding-right: 3px; }
.m16 { width: 16px; }
.m28 { width: 28px; padding-right: 3px; }
.m38 { width: 38px; padding-right: 2px; }
.m43 { width: 43px; padding-right: 2px; }

/* selection filters */
.filter {
  height: 31px;
  align-items: center;
  padding: 0 0 1px 6px;
  gap: 9px;
  border-top-color: #9c9c9c;
  background: linear-gradient(#cfcfcf, #dedede);
}
select {
  height: 20px;
  border: 1px solid #444;
  border-radius: 3px;
  padding: 0 0 0 1px;
  appearance: none;
  font: inherit;
  color: #111;
  background:
    linear-gradient(45deg, transparent 50%, #111 50%) right 9px top 7px / 5px 5px no-repeat,
    linear-gradient(-45deg, transparent 50%, #111 50%) right 4px top 7px / 5px 5px no-repeat,
    linear-gradient(#dcecfa, #6ca8dc) right / 17px 100% no-repeat,
    #fff;
}
.s1 { width: 142px; }
.s2 { width: 150px; }
.fl { display: flex; align-items: center; height: 100%; margin-left: -5px; }
.c { width: 23px; height: 22px; }
.c svg { width: 20px; height: 20px; }
.c svg.i16 { width: 16px; height: 16px; }
.fl .dn { width: 10px; }

/* cue and status line */
.status { height: 22px; align-items: center; background: #d9d9d9; border-bottom: 1px solid #8c8c8c; }
.status span { align-self: stretch; border-right: 1px solid #f4f4f4; }
.status .c { width: 21px; }
.cue { flex: 1 1 608px; }
.stat { flex: 1 1 607px; }
.cell { flex: 0 0 20px; }
.cell.wide { flex-basis: 36px; }

/* work area */
.main { flex: 1; display: flex; min-height: 0; }
.tabs {
  width: 33px;
  flex: none;
  padding: 17px 1px 0 6px;
  display: flex;
  flex-direction: column;
  align-items: flex-end;
  gap: 2px;
  background: linear-gradient(90deg, #b4b4b4, #a8a8a8);
  border-right: 1px solid #777;
}
.tabs button {
  width: 27px;
  height: 40px;
  margin-right: -1px;
  padding-left: 1px;
  border: 1px solid #666;
  border-right: 0;
  border-radius: 4px 0 0 4px;
  background: linear-gradient(90deg, #e6e6e6, #d0d0d0);
}
.tabs .gap { margin-top: 12px; }
.tabs .act { width: 29px; height: 44px; margin: 10px -2px -1px 0; padding-left: 3px; background: #f0f0f0; }
.strip { width: 9px; flex: none; background: #ececec; }
.view { flex: 1; min-width: 0; background: linear-gradient(#fff, #c0c0c0 72%); }
.view svg { width: 100%; height: 100%; }
.ax { font: 14px "Liberation Sans", sans-serif; }
.tri { font: 11px "Liberation Sans", sans-serif; }
.rbar { width: 46px; flex: none; border-left: 1px solid #f8f8f8; background: #d4d4d4; padding-right: 3px; }
.vbar { display: flex; flex-direction: column; align-items: center; border-bottom: 1px solid #f8f8f8; }
.vbar > div { display: flex; align-items: center; }
.hgrip {
  width: 36px;
  height: 7px;
  background: radial-gradient(circle, #a8a8a8 1px, #f0f0f0 1px, transparent 2px) 0 3px / 4px 4px repeat-x;
}
.lf { align-self: flex-start; height: 13px; padding: 2px 0 0 4px; }
.lf::after { content: ""; display: block; border: 3px solid transparent; border-right-color: #111; border-left: 0; }

.foot { padding-left: 350px; background: linear-gradient(#e4e4e4, #c8c8c8); border-top-color: #fff; }
.foot .bar { background: none; border-left: 1px solid #f8f8f8; }
```
